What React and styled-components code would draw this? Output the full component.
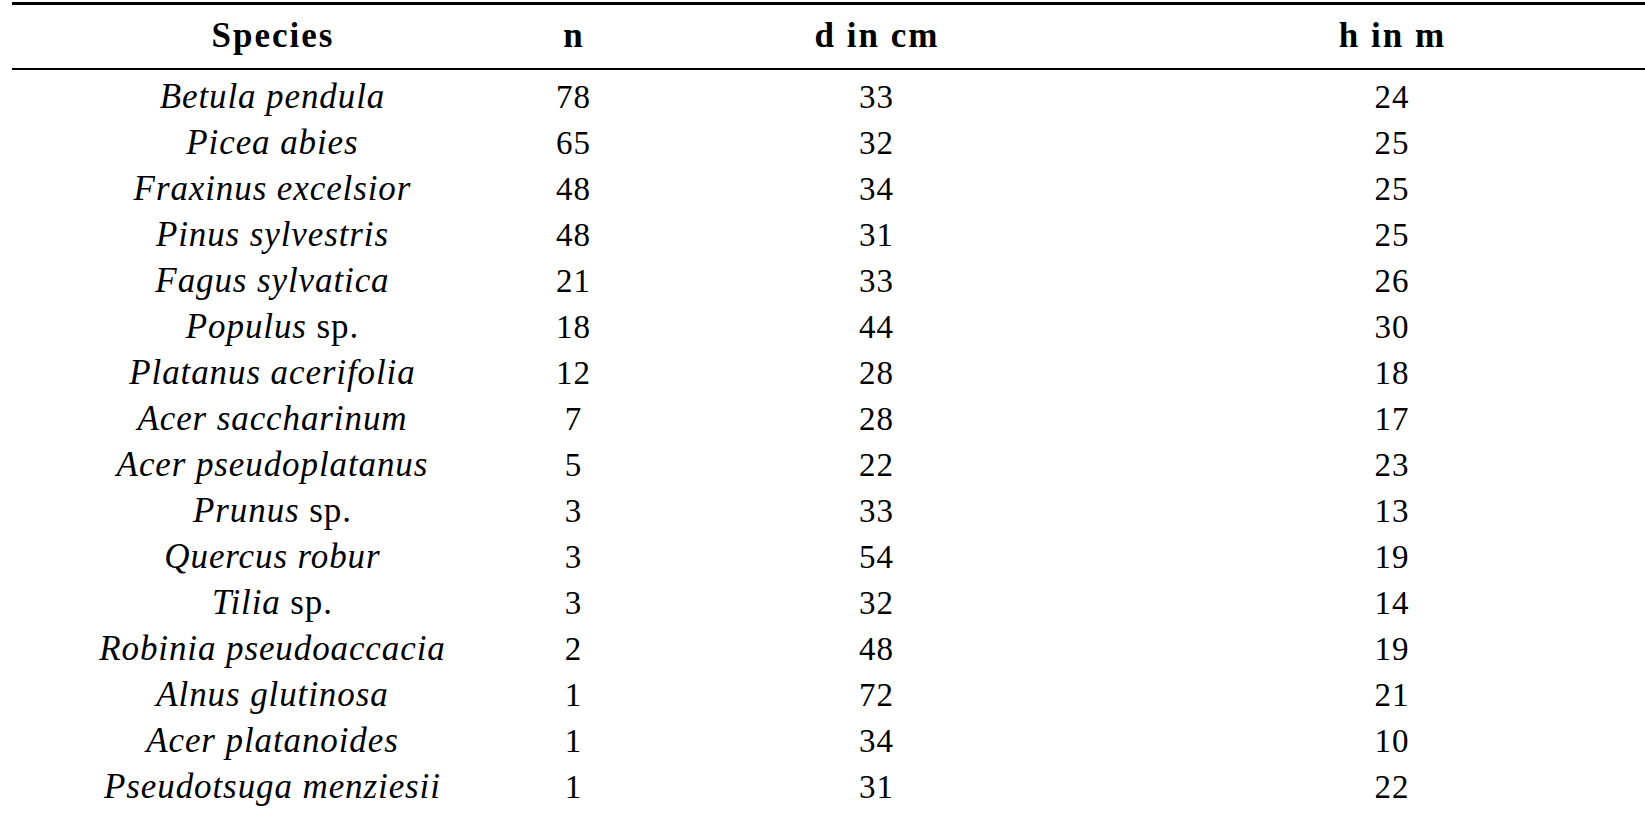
import React from 'react'
import styled, { createGlobalStyle } from 'styled-components'

const GlobalStyle = createGlobalStyle`
  html, body {
    margin: 0;
    padding: 0;
    background: #fff;
    overflow: hidden;
  }
  body {
    font-family: "Liberation Serif", "Times New Roman", serif;
    color: #000;
  }
`

const Page = styled.div`
  width: 1645px;
  height: 821px;
  padding: 2px 0 0 12px;
  box-sizing: border-box;
`

const Table = styled.div`
  width: 1633px;
  border-top: 3px solid #000;
`

const columns = '520px 82px 524px 507px'

const HeaderRow = styled.div`
  display: grid;
  grid-template-columns: ${columns};
  height: 63px;
  border-bottom: 2px solid #000;
`

const HeaderCell = styled.div`
  font-size: 35px;
  font-weight: 700;
  line-height: 61px;
  letter-spacing: 2px;
  padding-left: 2px;
  text-align: center;
  white-space: nowrap;
`

const Body = styled.div`
  padding-top: 4px;
`

const Row = styled.div`
  display: grid;
  grid-template-columns: ${columns};
  height: 46px;
`

const Cell = styled.div`
  font-size: ${(p) => (p.$name ? '35px' : '33px')};
  line-height: 46px;
  text-align: center;
  white-space: nowrap;
  letter-spacing: ${(p) => (p.$name ? '0.9px' : '1px')};
  padding-left: ${(p) => (p.$name ? '0.9px' : '1px')};
`

const Latin = styled.i`
  font-style: italic;
`

const rows = [
  ['Betula pendula', '', 78, 33, 24],
  ['Picea abies', '', 65, 32, 25],
  ['Fraxinus excelsior', '', 48, 34, 25],
  ['Pinus sylvestris', '', 48, 31, 25],
  ['Fagus sylvatica', '', 21, 33, 26],
  ['Populus', ' sp.', 18, 44, 30],
  ['Platanus acerifolia', '', 12, 28, 18],
  ['Acer saccharinum', '', 7, 28, 17],
  ['Acer pseudoplatanus', '', 5, 22, 23],
  ['Prunus', ' sp.', 3, 33, 13],
  ['Quercus robur', '', 3, 54, 19],
  ['Tilia', ' sp.', 3, 32, 14],
  ['Robinia pseudoaccacia', '', 2, 48, 19],
  ['Alnus glutinosa', '', 1, 72, 21],
  ['Acer platanoides', '', 1, 34, 10],
  ['Pseudotsuga menziesii', '', 1, 31, 22],
]

export default function App() {
  return (
    <Page>
      <GlobalStyle />
      <Table>
        <HeaderRow>
          <HeaderCell>Species</HeaderCell>
          <HeaderCell>n</HeaderCell>
          <HeaderCell>d in cm</HeaderCell>
          <HeaderCell>h in m</HeaderCell>
        </HeaderRow>
        <Body>
          {rows.map(([name, suffix, n, d, h]) => (
            <Row key={name}>
              <Cell $name>
                <Latin>{name}</Latin>
                {suffix}
              </Cell>
              <Cell>{n}</Cell>
              <Cell>{d}</Cell>
              <Cell>{h}</Cell>
            </Row>
          ))}
        </Body>
      </Table>
    </Page>
  )
}
